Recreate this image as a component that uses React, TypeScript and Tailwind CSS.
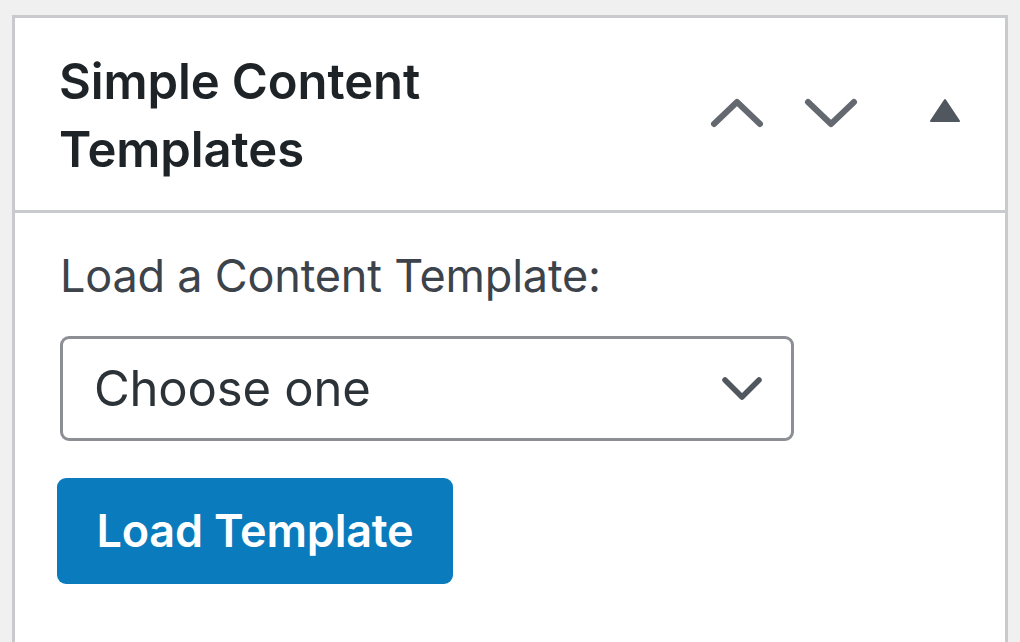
import React from "react";

export default function App() {
  const font = { fontFamily: 'Inter, "Noto Sans", "Liberation Sans", sans-serif' };
  return (
    <div className="w-[1020px] h-[642px] bg-[#f0f0f1] overflow-hidden pt-[15px] pl-[12px] pr-[12px]" style={font}>
      <div className="h-[700px] bg-white border-[3px] border-b-0 border-[#c8cacd]">
        <div className="h-[195px] border-b-[3px] border-[#c8cacd] flex items-start">
          <h2 className="pl-[44px] pt-[30px] w-[520px] text-[49px] leading-[68px] font-semibold text-[#1d2327] tracking-[-0.1px]">
            Simple Content Templates
          </h2>
          <div className="flex-1 flex items-start justify-end pt-[78px] pr-[44px]">
            <svg width="56" height="34" viewBox="0 0 56 34" className="mr-[38px]">
              <path d="M5 28 L28 6 L51 28" fill="none" stroke="#646970" strokeWidth="6" strokeLinecap="round" strokeLinejoin="round" />
            </svg>
            <svg width="56" height="34" viewBox="0 0 56 34" className="mr-[70px]">
              <path d="M5 6 L28 28 L51 6" fill="none" stroke="#646970" strokeWidth="6" strokeLinecap="round" strokeLinejoin="round" />
            </svg>
            <svg width="32" height="26" viewBox="0 0 32 26" className="mt-[2px]">
              <path d="M16 2 L30 23 L2 23 Z" fill="#50575e" stroke="#50575e" strokeWidth="2" strokeLinejoin="round" />
            </svg>
          </div>
        </div>
        <div className="pl-[45px] pt-[32px]">
          <div className="text-[45px] leading-[62px] text-[#3c434a] tracking-[-0.2px]">Load a Content Template:</div>
          <div className="mt-[29px] w-[734px] h-[105px] border-[3px] border-[#8c8f94] rounded-[9px] flex items-center justify-between pl-[31px] pr-[28px]">
            <span className="text-[49px] text-[#2c3338] tracking-[-0.2px]">Choose one</span>
            <svg width="42" height="26" viewBox="0 0 42 26">
              <path d="M4 4 L21 21 L38 4" fill="none" stroke="#50575e" strokeWidth="5.5" strokeLinecap="round" strokeLinejoin="round" />
            </svg>
          </div>
          <button className="mt-[37px] -ml-[3px] w-[396px] h-[106px] rounded-[9px] bg-[#0a7bbd] text-white text-[45px] font-semibold tracking-[-0.2px] flex items-center justify-center">
            Load Template
          </button>
        </div>
      </div>
    </div>
  );
}
